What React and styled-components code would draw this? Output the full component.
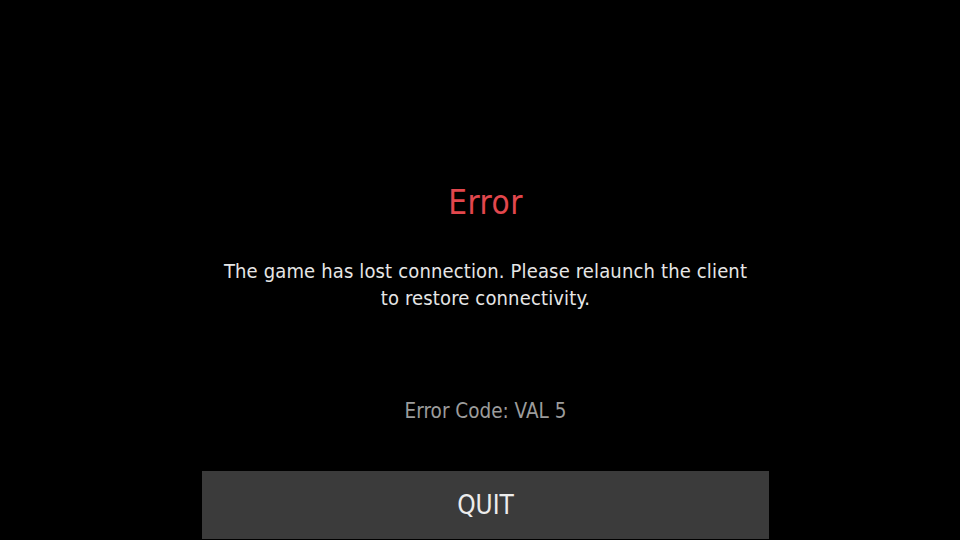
import React from 'react';
import styled, { createGlobalStyle } from 'styled-components';

const GlobalStyle = createGlobalStyle`
  html, body {
    margin: 0;
    padding: 0;
    background: #000;
  }
  #root {
    height: 540px;
  }
`;

function App() {
  return <Screen>
    <GlobalStyle />
    <Dialog>
      <Title>Error</Title>
      <Message>
        The game has lost connection. Please relaunch the client<br />
        to restore connectivity.
      </Message>
      <Code>Error Code: VAL 5</Code>
      <QuitButton>QUIT</QuitButton>
    </Dialog>
  </Screen>;
}

export default App;

const Screen = styled.div`
    width: 960px;
    height: 540px;
    background: #000;
    display: flex;
    justify-content: center;
    font-family: "DejaVu Sans Condensed", "Liberation Sans Narrow", "Roboto", sans-serif;
    font-stretch: condensed;
    overflow: hidden;
`

const Dialog = styled.div`
    width: 567px;
    margin-left: 11px;
    display: flex;
    flex-direction: column;
    align-items: center;
    padding-top: 185px;
`

const Title = styled.div`
    color: #e2474d;
    font-size: 33px;
    line-height: 36px;
    letter-spacing: 0.5px;
`

const Message = styled.div`
    margin-top: 37px;
    color: #e6e6e6;
    font-size: 20px;
    line-height: 27px;
    letter-spacing: 0.15px;
    text-align: center;
    white-space: nowrap;
`

const Code = styled.div`
    margin-top: 88px;
    color: #9c9c9c;
    font-size: 20.5px;
    line-height: 22px;
`

const QuitButton = styled.button`
    margin-top: 49px;
    width: 567px;
    height: 68px;
    border: none;
    background: #3b3b3b;
    color: #ececec;
    font-family: inherit;
    font-stretch: condensed;
    font-size: 26px;
    cursor: pointer;
`
